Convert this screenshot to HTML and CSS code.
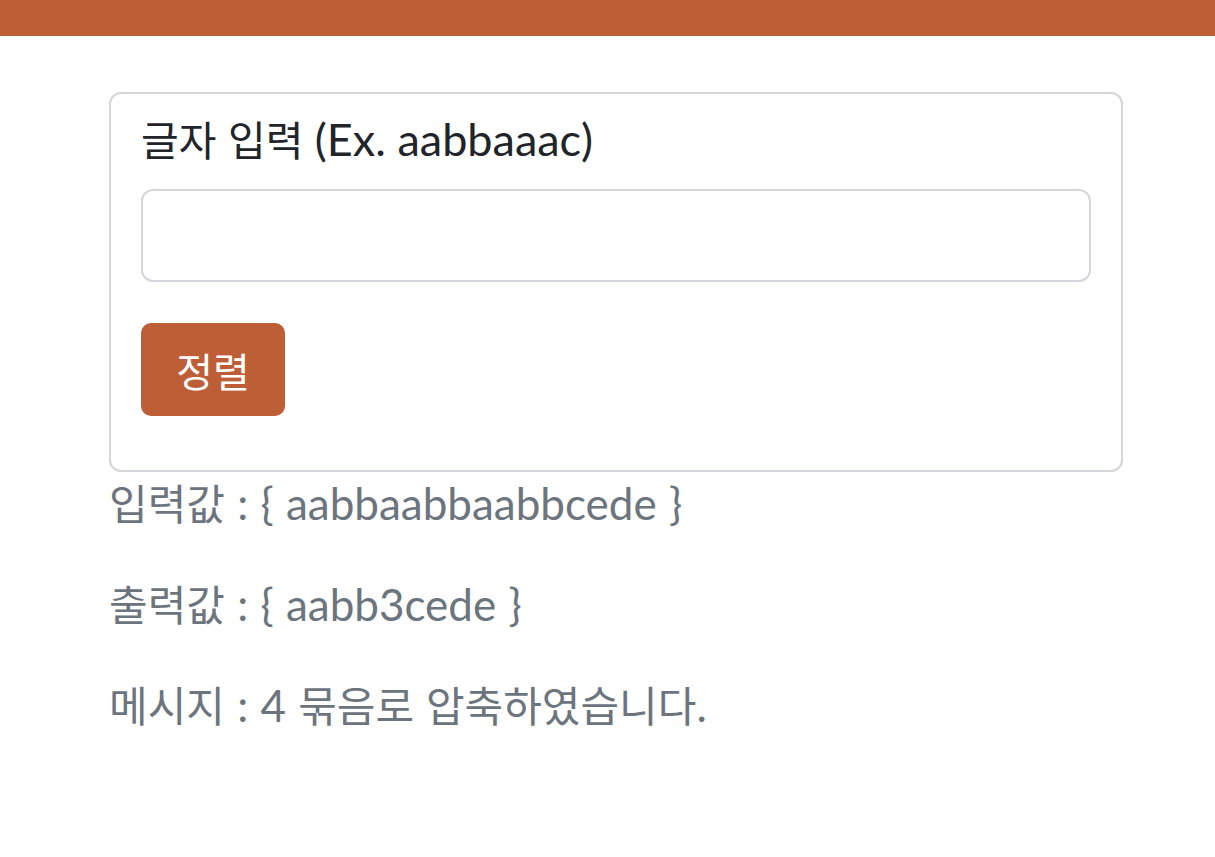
FILE: index.html
```html
<!DOCTYPE html>
<html lang="ko">
<head>
<meta charset="utf-8">
<title>글자 압축</title>
<link rel="stylesheet" href="styles.css">
</head>
<body>
<header class="topbar"></header>
<main class="page">
  <section class="card">
    <label class="field-label" for="txt">글자 입력 <span class="ex">(Ex. aabbaaac)</span></label>
    <input id="txt" class="field-input" type="text">
    <button class="btn" type="button">정렬</button>
  </section>
  <p class="result"><span class="ko">입력값</span> : { aabbaabbaabbcede }</p>
  <p class="result"><span class="ko">출력값</span> : { aabb3cede }</p>
  <p class="result"><span class="ko">메시지</span> : 4 <span class="ko">묶음로 압축하였습니다</span>.</p>
</main>
</body>
</html>
```

FILE: styles.css
```css
html, body {
  margin: 0;
  padding: 0;
  background: #ffffff;
}

body {
  font-family: "Lato", "Noto Sans CJK KR", sans-serif;
  color: #212529;
}

.topbar {
  height: 36px;
  background: #bd5e37;
}

.page {
  width: 1014px;
  margin: 56px 0 0 109px;
}

.card {
  display: flex;
  flex-direction: column;
  align-items: flex-start;
  border: 2px solid #d3d6db;
  border-radius: 12px;
  padding: 18px 30px 54px;
}

.field-label {
  font-family: "Noto Sans CJK KR", sans-serif;
  font-size: 41px;
  line-height: 52px;
  color: #212529;
  margin-bottom: 24px;
}

.field-label .ex {
  font-family: "Lato", sans-serif;
  font-size: 45px;
}

.field-input {
  box-sizing: border-box;
  width: 100%;
  height: 93px;
  border: 2px solid #d3d6db;
  border-radius: 12px;
  background: #ffffff;
  font-size: 40px;
  padding: 0 24px;
  outline: none;
}

.btn {
  margin-top: 41px;
  width: 144px;
  height: 93px;
  border: none;
  border-radius: 10px;
  background: #bd5e37;
  color: #ffffff;
  font-family: "Noto Sans CJK KR", sans-serif;
  font-size: 40px;
  padding: 0;
  cursor: pointer;
}

.result {
  margin: 0 0 40px;
  font-size: 44px;
  line-height: 60px;
  word-spacing: 1px;
  color: #6c757d;
  white-space: nowrap;
}

.result .ko {
  font-family: "Noto Sans CJK KR", sans-serif;
  font-size: 42px;
  word-spacing: 0;
}
```
